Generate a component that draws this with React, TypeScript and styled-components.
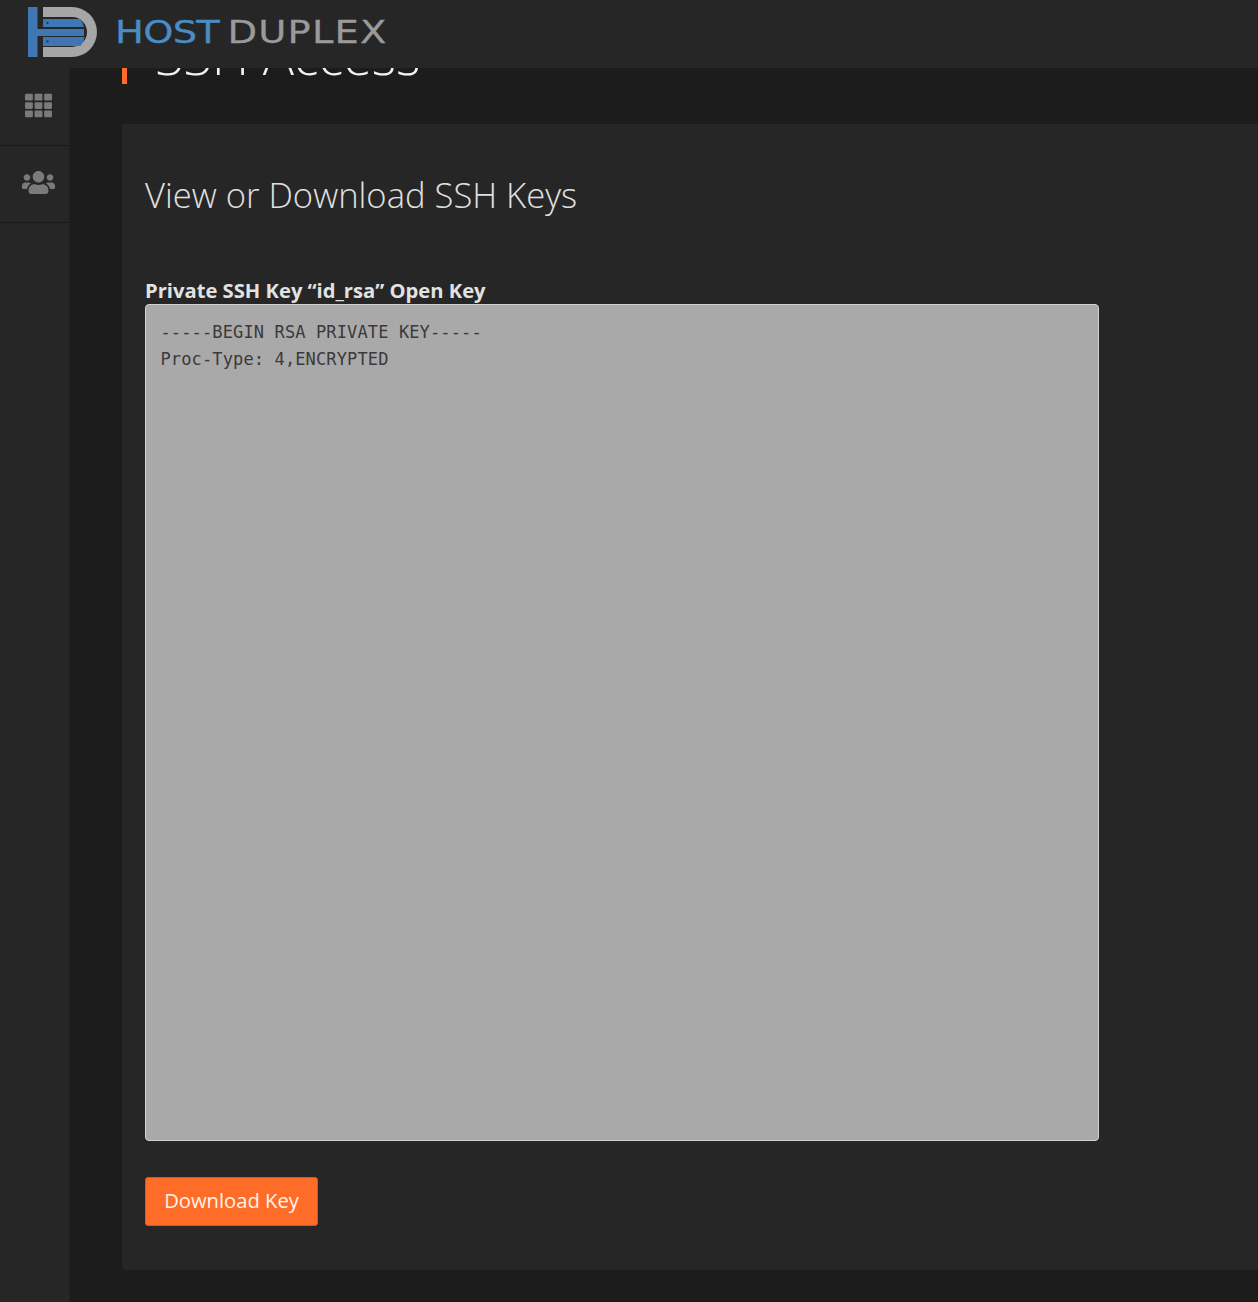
import styled, { createGlobalStyle } from 'styled-components';
import { FaTh, FaUsers } from 'react-icons/fa';

const GlobalStyle = createGlobalStyle`
  html, body {
    margin: 0;
    height: 100%;
    overflow: hidden;
    background: #1c1c1c;
  }
  body {
    font-family: 'Open Sans', sans-serif;
  }
`;

const Page = styled.div`
  position: relative;
  display: flex;
  width: 1258px;
  height: 1302px;
  overflow: hidden;
  background: #1c1c1c;
`;

const Header = styled.header`
  position: absolute;
  top: 0;
  left: 0;
  right: 0;
  z-index: 2;
  height: 68px;
  display: flex;
  align-items: center;
  padding: 0 0 4px 27px;
  background: #262626;
  box-sizing: border-box;
`;

const Brand = styled.div`
  display: flex;
  gap: 7px;
  margin-left: 17px;
  font-family: 'DejaVu Sans', sans-serif;
  font-size: 32px;
  line-height: 1;
  white-space: nowrap;
  transform: scaleX(1.2);
  transform-origin: left center;
  -webkit-text-stroke: 0.3px currentColor;
`;

const BrandPart = styled.span<{ $color: string; $spacing: number }>`
  color: ${(p) => p.$color};
  letter-spacing: ${(p) => p.$spacing}px;
`;

const Sidebar = styled.nav`
  flex: 0 0 70px;
  padding-top: 69px;
  background: #262626;
  border-right: 1px solid #222;
  box-sizing: border-box;
`;

const SideItem = styled.a`
  display: flex;
  height: 77px;
  align-items: center;
  justify-content: center;
  padding: 0 0 3px 8px;
  color: #7a7a7a;
  border-bottom: 1px solid #191919;
  box-sizing: border-box;
`;

const Main = styled.main`
  flex: 1;
  min-width: 0;
  padding-left: 52px;
`;

const Title = styled.h1`
  margin: -4px 0 40px;
  height: 88px;
  padding-left: 28px;
  border-left: 5px solid #ff6c27;
  box-sizing: border-box;
  font-size: 52px;
  font-weight: 300;
  line-height: 118px;
  color: #f2f2f2;
  white-space: nowrap;
  overflow: hidden;
`;

const Panel = styled.section`
  height: 1146px;
  padding: 48px 0 0 23px;
  background: #262626;
  border-radius: 4px 0 0 4px;
  box-sizing: border-box;
`;

const PanelTitle = styled.h2`
  margin: 0 0 60px;
  font-size: 34.6px;
  font-weight: 300;
  line-height: 46px;
  color: #e0e0e0;
`;

const Label = styled.label`
  display: block;
  font-size: 20.2px;
  font-weight: 700;
  line-height: 24px;
  color: #e2e2e2;
`;

const KeyBox = styled.textarea`
  display: block;
  width: 954px;
  height: 837px;
  margin: 2px 0 36px;
  padding: 14px 14.5px;
  background: #a9a9a9;
  border: 1px solid #d2d2d2;
  border-radius: 4px;
  box-sizing: border-box;
  font-family: 'DejaVu Sans Mono', monospace;
  font-size: 17px;
  letter-spacing: 0.13px;
  line-height: 27px;
  color: #3a3a3a;
  resize: none;
  outline: none;
`;

const DownloadButton = styled.button`
  display: block;
  width: 173px;
  height: 49px;
  padding: 0 0 3px;
  background: #ff6c27;
  border: 1px solid #d9561a;
  border-radius: 3px;
  box-sizing: border-box;
  font-family: inherit;
  font-size: 20.2px;
  color: #fff3ea;
`;

const Logo = () => (
  <svg width="71" height="52" viewBox="0 0 71 52">
    <path
      d="M16 1h29a25 25 0 0 1 0 50H16v-10h29a15 15 0 0 0 0-30H16z"
      fill="#a6a6a6"
    />
    <path d="M1 1h9.500v22H57v7H10.500v21H1z" fill="#3f76b4" />
    <path d="M16 13h37a19 19 0 0 1 4 8H16z" fill="#3f76b4" />
    <path d="M16 31h41.500a17 17 0 0 1-4 9H16z" fill="#3f76b4" />
    <circle cx="20.500" cy="17" r="1.200" fill="#1f3f63" />
    <circle cx="20.500" cy="35.500" r="1.200" fill="#1f3f63" />
  </svg>
);

const App = () => {
  return (
    <>
      <GlobalStyle />
      <Page>
        <Header>
          <Logo />
          <Brand>
            <BrandPart $color="#4a8cc4" $spacing={-0.6}>
              HOST
            </BrandPart>
            <BrandPart $color="#9a9a9a" $spacing={1}>
              DUPLEX
            </BrandPart>
          </Brand>
        </Header>
        <Sidebar>
          <SideItem>
            <FaTh size={27} />
          </SideItem>
          <SideItem>
            <FaUsers size={33} />
          </SideItem>
        </Sidebar>
        <Main>
          <Title>SSH Access</Title>
          <Panel>
            <PanelTitle>View or Download SSH Keys</PanelTitle>
            <Label htmlFor="key">Private SSH Key “id_rsa” Open Key</Label>
            <KeyBox
              id="key"
              readOnly
              defaultValue={'-----BEGIN RSA PRIVATE KEY-----\nProc-Type: 4,ENCRYPTED'}
            />
            <DownloadButton>Download Key</DownloadButton>
          </Panel>
        </Main>
      </Page>
    </>
  );
};

export default App;
